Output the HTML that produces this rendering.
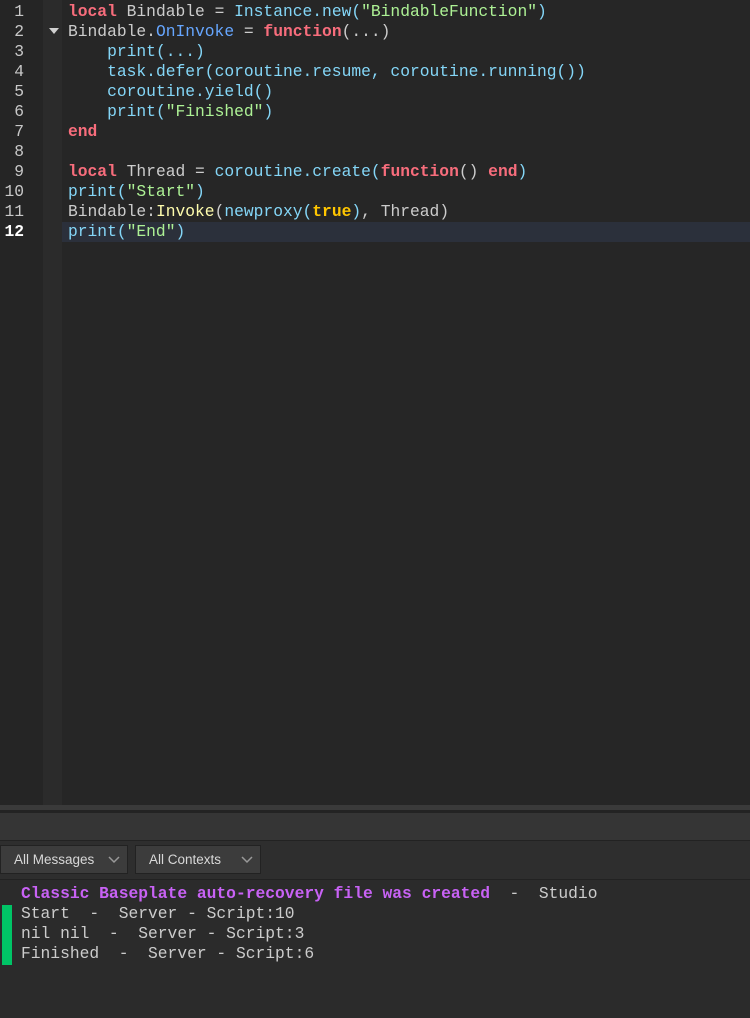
<!DOCTYPE html>
<html><head><style>
body{margin:0;width:750px;height:1018px;background:#252525;overflow:hidden;position:relative;font-family:"Liberation Mono",monospace;}
.gut{position:absolute;left:0;top:0;width:43px;height:805px;background:#252525}
.fold{position:absolute;left:43px;top:0;width:19px;height:805px;background:#2b2b2b}
.code{position:absolute;left:62px;top:0;width:688px;height:805px;background:#262626}
.cur{position:absolute;left:62px;top:222px;width:688px;height:20px;background:#2b303b}
.ln{position:absolute;left:0;width:24px;text-align:right;font-size:16.3px;line-height:20px;color:#c8c8c8}
.line{position:absolute;left:68px;font-size:16.3px;line-height:20px;color:#cccccc;white-space:pre}
.k{color:#f86d7c;font-weight:bold}.b{color:#84d6f7}.s{color:#adf195}.m{color:#66a6ff}.t{color:#ffc600;font-weight:bold}
.tri{position:absolute;left:49px;top:28px;width:0;height:0;border-left:5px solid transparent;border-right:5px solid transparent;border-top:6px solid #d0d0d0}
.c{position:absolute;left:21px;font-size:16.3px;line-height:20px;color:#cccccc;white-space:pre}
.dd{position:absolute;top:845px;height:29px;background:#3c3c3c;border:1px solid #222;box-sizing:border-box;font-family:"Liberation Sans",sans-serif;font-size:13.5px;color:#d8d8d8;line-height:27px;padding-left:13px}
.dd svg{position:absolute;right:7px;top:10px}
</style></head><body>
<div class="gut"></div><div class="fold"></div><div class="code"></div><div class="cur"></div>
<div class="tri"></div>
<div class="ln" style="top:2px">1</div>
<div class="ln" style="top:22px">2</div>
<div class="ln" style="top:42px">3</div>
<div class="ln" style="top:62px">4</div>
<div class="ln" style="top:82px">5</div>
<div class="ln" style="top:102px">6</div>
<div class="ln" style="top:122px">7</div>
<div class="ln" style="top:142px">8</div>
<div class="ln" style="top:162px">9</div>
<div class="ln" style="top:182px">10</div>
<div class="ln" style="top:202px">11</div>
<div class="ln" style="top:222px;color:#fff;font-weight:bold">12</div>
<div class="line" style="top:2px"><span class="k">local</span> Bindable = <span class="b">Instance.new(</span><span class="s">"BindableFunction"</span><span class="b">)</span></div>
<div class="line" style="top:22px">Bindable.<span class="m">OnInvoke</span> = <span class="k">function</span>(...)</div>
<div class="line" style="top:42px">    <span class="b">print(...)</span></div>
<div class="line" style="top:62px">    <span class="b">task.defer(coroutine.resume, coroutine.running())</span></div>
<div class="line" style="top:82px">    <span class="b">coroutine.yield()</span></div>
<div class="line" style="top:102px">    <span class="b">print(</span><span class="s">"Finished"</span><span class="b">)</span></div>
<div class="line" style="top:122px"><span class="k">end</span></div>
<div class="line" style="top:162px"><span class="k">local</span> Thread = <span class="b">coroutine.create(</span><span class="k">function</span>() <span class="k">end</span><span class="b">)</span></div>
<div class="line" style="top:182px"><span class="b">print(</span><span class="s">"Start"</span><span class="b">)</span></div>
<div class="line" style="top:202px">Bindable:<span style="color:#fdfbac">Invoke</span>(<span class="b">newproxy(</span><span class="t">true</span><span class="b">)</span>, Thread)</div>
<div class="line" style="top:222px"><span class="b">print(</span><span class="s">"End"</span><span class="b">)</span></div>
<div style="position:absolute;left:0;top:805px;width:750px;height:5px;background:#3a3a3a"></div>
<div style="position:absolute;left:0;top:810px;width:750px;height:3px;background:#232323"></div>
<div style="position:absolute;left:0;top:813px;width:750px;height:27px;background:#353535"></div>
<div style="position:absolute;left:0;top:840px;width:750px;height:1px;background:#222"></div>
<div style="position:absolute;left:0;top:841px;width:750px;height:38px;background:#2e2e2e"></div>
<div style="position:absolute;left:0;top:879px;width:750px;height:1px;background:#222"></div>
<div style="position:absolute;left:0;top:880px;width:750px;height:138px;background:#2b2b2b"></div>
<div class="dd" style="left:0;width:128px">All Messages<svg width="12" height="8"><path d="M1 1L6 6L11 1" stroke="#999" stroke-width="1.5" fill="none"/></svg></div>
<div class="dd" style="left:135px;width:126px">All Contexts<svg width="12" height="8"><path d="M1 1L6 6L11 1" stroke="#999" stroke-width="1.5" fill="none"/></svg></div>
<div style="position:absolute;left:2px;top:905px;width:10px;height:60px;background:#00c466"></div>
<div class="c" style="top:884px"><span style="color:#c862f5;font-weight:bold">Classic Baseplate auto-recovery file was created</span>  -  Studio</div>
<div class="c" style="top:904px">Start  -  Server - Script:10</div>
<div class="c" style="top:924px">nil nil  -  Server - Script:3</div>
<div class="c" style="top:944px">Finished  -  Server - Script:6</div>
</body></html>
